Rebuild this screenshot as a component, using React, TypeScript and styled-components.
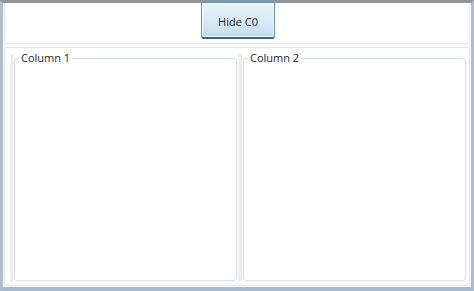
import styled, { createGlobalStyle } from 'styled-components';

const GlobalStyle = createGlobalStyle`
  html, body {
    margin: 0;
    padding: 0;
    background: #ffffff;
  }
  body {
    font-family: 'Segoe UI', 'Open Sans', 'Liberation Sans', sans-serif;
  }
`;

const Window = styled.div`
  width: 474px;
  height: 291px;
  box-sizing: border-box;
  border-top: 3px solid #8e959c;
  border-left: 3px solid #aebccb;
  border-right: 3px solid #aebccb;
  border-bottom: 4px solid #a6b8cc;
  background: #ffffff;
  display: flex;
  flex-direction: column;
  gap: 3px;
  padding: 1px;
`;

const TopBar = styled.div`
  height: 41px;
  box-sizing: border-box;
  border: 1px solid #e3e5e8;
  border-top: none;
  border-radius: 0 0 2px 2px;
  display: flex;
  justify-content: center;
  align-items: flex-start;
  margin-top: -1px;
`;

const Button = styled.button`
  width: 74px;
  height: 37px;
  margin-top: -1px;
  margin-left: 2px;
  box-sizing: border-box;
  border: 1px solid #6d91ad;
  border-bottom: 2px solid #3e6482;
  border-radius: 0 0 3px 3px;
  background: linear-gradient(#eaf4fb 0%, #d9ebf7 50%, #c4dced 100%);
  box-shadow: inset 0 0 0 1px #f4f9fd;
  font-family: 'Segoe UI', 'Open Sans', 'Liberation Sans', sans-serif;
  font-size: 11px;
  color: #1e1e1e;
  padding: 0;
  padding-top: 2px;
`;

const Body = styled.div`
  flex: 1;
  box-sizing: border-box;
  border: 1px solid #e3e5e8;
  border-radius: 2px;
  display: grid;
  grid-template-columns: 5px 1fr 6px 1fr;
  padding: 6px 3px 4px 4px;
`;

const Splitter = styled.div`
  background: #ececec;
  border-left: 1px solid #f6f6f6;
  margin: 0 1px;
`;

const Group = styled.fieldset`
  margin: 0;
  padding: 0;
  min-width: 0;
  box-sizing: border-box;
  border: 1px solid #d5dfe5;
  border-radius: 3px;
  box-shadow: inset 0 0 0 1px #ffffff, 0 0 0 1px #ffffff;
  position: relative;
  top: -3px;
  height: calc(100% + 3px);
`;

const Legend = styled.legend`
  font-family: 'Segoe UI', 'Open Sans', 'Liberation Sans', sans-serif;
  font-size: 11px;
  color: #1e1e1e;
  padding: 0 2px;
  margin-left: 4px;
  line-height: 14px;
`;

export default function App() {
  return (
    <>
      <GlobalStyle />
      <Window>
        <TopBar>
          <Button>Hide C0</Button>
        </TopBar>
        <Body>
          <Splitter />
          <Group>
            <Legend>Column 1</Legend>
          </Group>
          <Splitter />
          <Group>
            <Legend>Column 2</Legend>
          </Group>
        </Body>
      </Window>
    </>
  );
}
